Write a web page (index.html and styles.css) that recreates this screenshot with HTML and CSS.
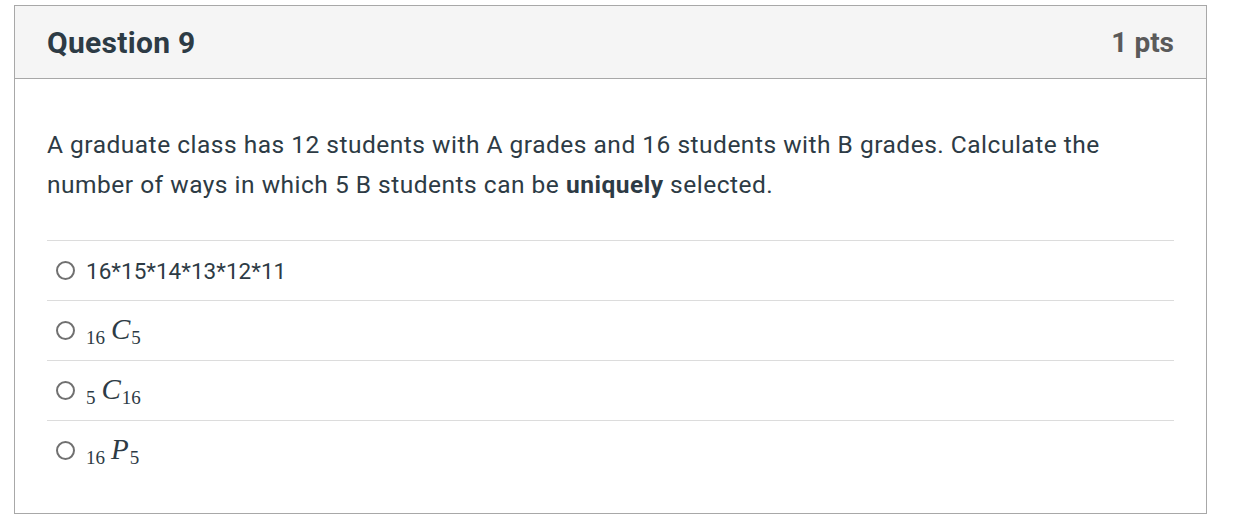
FILE: index.html
```html
<!DOCTYPE html>
<html>
<head>
<meta charset="utf-8">
<link rel="stylesheet" href="styles.css">
</head>
<body>
<div class="page">
  <div class="question">
    <div class="header">
      <span class="title">Question 9</span>
      <span class="pts">1 pts</span>
    </div>
    <div class="content">
      <p class="text">A graduate class has 12 students with A grades and 16 students with B grades. Calculate the number of ways in which 5 B students can be <strong>uniquely</strong> selected.</p>
      <div class="answers">
        <div class="answer"><span class="radio"></span><span class="label">16*15*14*13*12*11</span></div>
        <div class="answer"><span class="radio"></span><span class="math"><sub>16</sub><i>C</i><sub class="after">5</sub></span></div>
        <div class="answer"><span class="radio"></span><span class="math"><sub>5</sub><i>C</i><sub class="after">16</sub></span></div>
        <div class="answer"><span class="radio"></span><span class="math"><sub>16</sub><i>P</i><sub class="after">5</sub></span></div>
      </div>
    </div>
  </div>
</div>
</body>
</html>
```

FILE: styles.css
```css
html, body {
  margin: 0;
  padding: 0;
  background: #ffffff;
}
.page {
  padding: 5px 35px 0 14px;
  font-family: Roboto, "Liberation Sans", sans-serif;
  color: #2d3b45;
}
.question {
  border: 1px solid #a8a8a8;
  box-sizing: border-box;
  height: 509px;
}
.header {
  display: flex;
  justify-content: space-between;
  align-items: center;
  height: 72px;
  padding: 0 32px;
  background: #f5f5f5;
  border-bottom: 1px solid #a8a8a8;
}
.title {
  font-weight: 700;
  font-size: 30px;
  letter-spacing: 0.3px;
  color: #2d3b45;
}
.pts {
  font-weight: 700;
  font-size: 28px;
  color: #5a5a5a;
}
.content {
  padding: 46px 32px 0 32px;
}
.text {
  margin: 0;
  font-size: 24.5px;
  letter-spacing: 0.5px;
  line-height: 40px;
  max-width: 1090px;
}
.text strong {
  font-weight: 700;
}
.answers {
  margin-top: 35px;
}
.answer {
  display: flex;
  align-items: center;
  height: 59px;
  border-top: 1px solid #dcdcdc;
  padding-left: 9px;
  gap: 11px;
}
.radio {
  width: 15px;
  height: 15px;
  border: 2px solid #707070;
  border-radius: 50%;
  flex: none;
}
.label {
  font-size: 22.5px;
}
.math {
  font-family: "Liberation Serif", "DejaVu Serif", serif;
  font-size: 29px;
  color: #2d3b45;
}
.math sub {
  font-size: 19px;
  vertical-align: -5px;
}
.math i {
  margin-left: 6px;
}
.math sub.after {
  margin-left: 1px;
}
```
